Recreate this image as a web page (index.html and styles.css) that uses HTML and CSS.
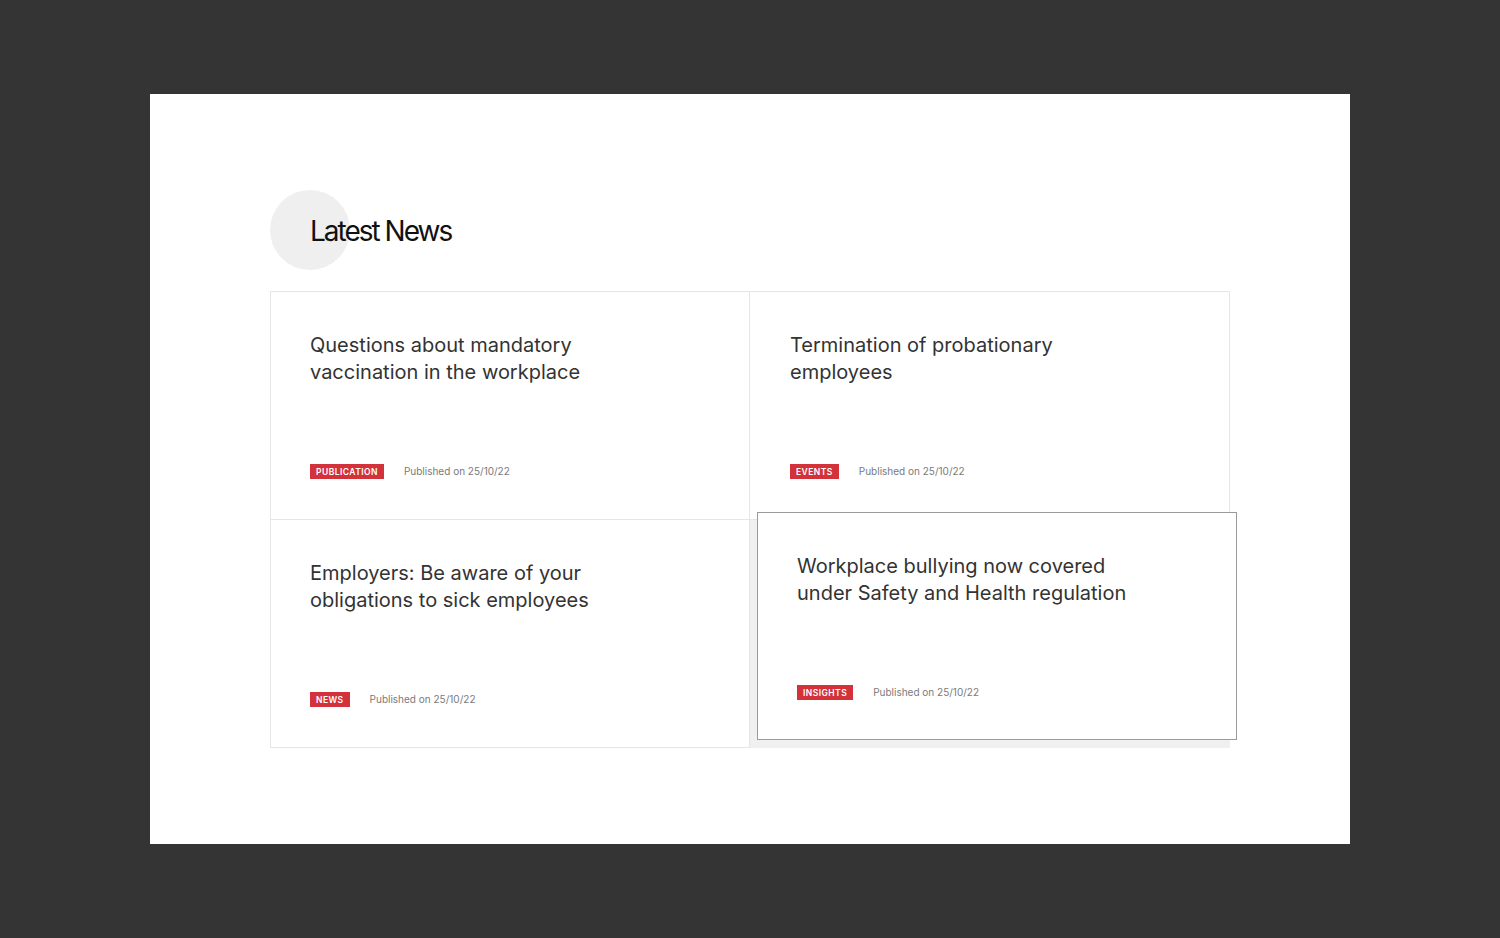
FILE: index.html
```html
<!DOCTYPE html>
<html lang="en">
<head>
<meta charset="utf-8">
<title>Latest News</title>
<link rel="stylesheet" href="styles.css">
</head>
<body>
<main class="panel">
  <section class="news">
    <header class="news-head">
      <span class="blob"></span>
      <h2 class="news-title">Latest News</h2>
    </header>
    <div class="grid">
      <article class="cell">
        <div class="card">
          <h3 class="card-title">Questions about mandatory vaccination in the workplace</h3>
          <div class="meta"><span class="tag">Publication</span><span class="date">Published on 25/10/22</span></div>
        </div>
      </article>
      <article class="cell cell-right">
        <div class="card">
          <h3 class="card-title">Termination of probationary employees</h3>
          <div class="meta"><span class="tag">Events</span><span class="date">Published on 25/10/22</span></div>
        </div>
      </article>
      <article class="cell">
        <div class="card">
          <h3 class="card-title">Employers: Be aware of your obligations to sick employees</h3>
          <div class="meta"><span class="tag">News</span><span class="date">Published on 25/10/22</span></div>
        </div>
      </article>
      <article class="cell cell-right cell-hover">
        <div class="card">
          <h3 class="card-title">Workplace bullying now covered under Safety and Health regulation</h3>
          <div class="meta"><span class="tag">Insights</span><span class="date">Published on 25/10/22</span></div>
        </div>
      </article>
    </div>
  </section>
</main>
</body>
</html>
```

FILE: styles.css
```css
* { box-sizing: border-box; }
html, body { margin: 0; }
body {
  background: #343434;
  padding: 94px 150px;
  font-family: Inter, "Noto Sans", sans-serif;
}
.panel {
  background: #ffffff;
  height: 750px;
  padding: 96px 120px 0;
}
.news-head {
  position: relative;
  height: 80px;
  display: flex;
  align-items: center;
  margin-bottom: 21px;
}
.blob {
  position: absolute;
  left: 0;
  top: 0;
  width: 80px;
  height: 80px;
  border-radius: 50%;
  background: #efefef;
}
.news-title {
  position: relative;
  margin: 2px 0 0 40px;
  font-size: 28px;
  font-weight: 400;
  letter-spacing: -2px;
  color: #111;
  line-height: 1;
}
.grid {
  display: grid;
  grid-template-columns: 479px 480px;
  width: max-content;
  border-top: 1px solid #e6e6e6;
  border-left: 1px solid #e6e6e6;
}
.cell {
  height: 228px;
  border-right: 1px solid #e6e6e6;
  border-bottom: 1px solid #e6e6e6;
}
.card {
  height: 100%;
  padding: 40px 39px 40px;
  display: flex;
  flex-direction: column;
  justify-content: space-between;
  background: #fff;
}
.cell-right .card { padding-left: 40px; }
.card-title {
  margin: 0;
  max-width: 345px;
  font-size: 20px;
  font-weight: 400;
  line-height: 27px;
  color: #333;
}
.meta {
  display: flex;
  align-items: center;
  gap: 20px;
  height: 15px;
}
.tag {
  display: inline-flex;
  align-items: center;
  height: 15px;
  background: #d3323a;
  color: #fff;
  font-size: 8.5px;
  font-weight: 600;
  text-transform: uppercase;
  letter-spacing: 0.45px;
  padding: 1px 6px 0;
}
.date {
  font-size: 10px;
  line-height: 15px;
  color: #7a7a7a;
}
.cell-hover {
  background: #f0f0f0;
  border-right-color: transparent;
  border-bottom-color: #f0f0f0;
}
.cell-hover .card {
  width: 480px;
  height: 228px;
  margin-top: -1px;
  transform: translate(7px, -7px);
  border: 1.5px solid #9a9a9a;
  padding: 40px 39px 39px;
}
```
